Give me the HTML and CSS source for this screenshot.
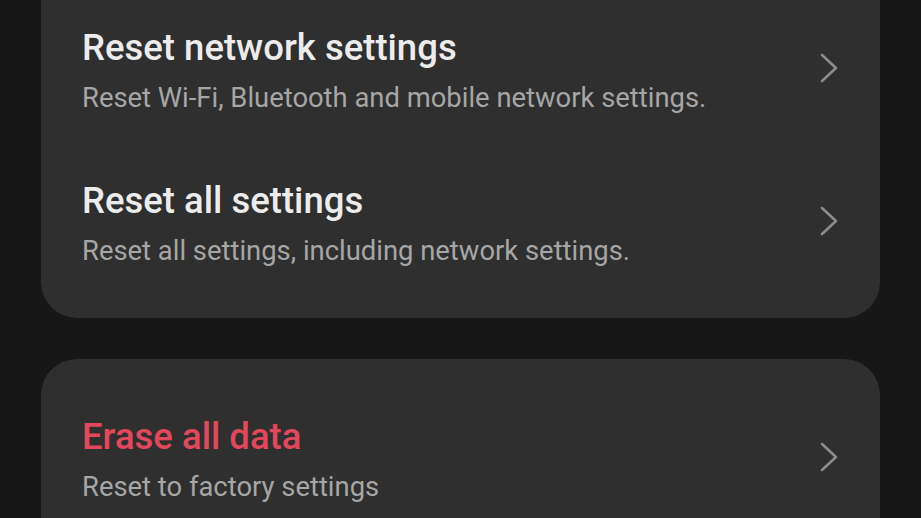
FILE: index.html
```html
<!DOCTYPE html>
<html>
  <head>
    <meta name="viewport" content="width=device-width, initial-scale=1.0" />
    <link rel="stylesheet" href="styles.css">
  </head>
  <body>
    <div class="card card-first">
      <div class="row">
        <div class="row-text">
          <div class="row-title">Reset network settings</div>
          <div class="row-sub">Reset Wi-Fi, Bluetooth and mobile network settings.</div>
        </div>
        <svg class="chevron" viewBox="0 0 20 32"><path d="M3 3 L17 16 L3 29" /></svg>
      </div>
      <div class="row">
        <div class="row-text">
          <div class="row-title">Reset all settings</div>
          <div class="row-sub">Reset all settings, including network settings.</div>
        </div>
        <svg class="chevron" viewBox="0 0 20 32"><path d="M3 3 L17 16 L3 29" /></svg>
      </div>
    </div>
    <div class="card card-erase">
      <div class="row">
        <div class="row-text">
          <div class="row-title danger">Erase all data</div>
          <div class="row-sub">Reset to factory settings</div>
        </div>
        <svg class="chevron" viewBox="0 0 20 32"><path d="M3 3 L17 16 L3 29" /></svg>
      </div>
    </div>
  </body>
</html>
```

FILE: styles.css
```css
html,
body {
  height: 100%;
  overflow: hidden;
}
body {
  margin: 0;
  padding: 0 41px;
  background: #171717;
  font-family: Roboto, "Noto Sans", sans-serif;
}
.card {
  background: #2f2f2f;
  border-radius: 36px;
  padding: 18px 0;
  margin-bottom: 41px;
}
.card-first {
  margin-top: -60px;
  padding-top: 54px;
}
.card-erase {
  padding-top: 24px;
}
.row {
  display: flex;
  align-items: center;
  padding: 32px 41px;
}
.row-text {
  flex: 1;
}
.row-title {
  font-size: 36.5px;
  line-height: 44px;
  font-weight: 500;
  color: #ececec;
}
.row-title.danger {
  color: #e2475b;
}
.row-sub {
  margin-top: 11px;
  font-size: 27.4px;
  line-height: 34px;
  color: #a6a6a6;
}
.chevron {
  width: 20px;
  height: 32px;
  margin-bottom: 6px;
  fill: none;
  stroke: #8c8c8c;
  stroke-width: 2.6;
  stroke-linecap: round;
  stroke-linejoin: round;
}
```
